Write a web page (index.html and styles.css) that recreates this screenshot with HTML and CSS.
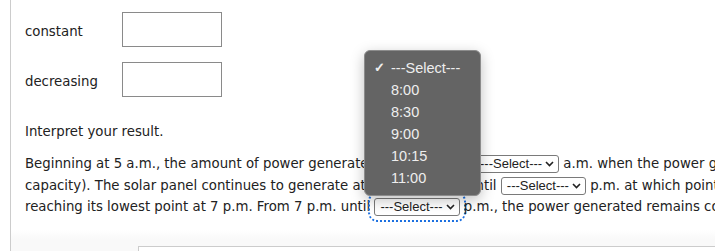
FILE: index.html
```html
<!DOCTYPE html>
<html lang="en">
<head>
    <meta charset="UTF-8">
    <title>Interpret your result</title>
    <link rel="stylesheet" href="styles.css">
</head>
<body>
    <div class="question">
        <div class="row">
            <span class="label">constant</span>
            <span class="answer-box"></span>
        </div>
        <div class="row">
            <span class="label">decreasing</span>
            <span class="answer-box"></span>
        </div>
        <p class="prompt">Interpret your result.</p>
        <div class="para">
            <div class="line">Beginning at 5 a.m., the amount of power generated <span class="tight">increases</span> until <span class="sel">---Select--- <svg class="chev" width="9" height="6" viewBox="0 0 9 6"><path d="M1 1 L4.5 4.5 L8 1" fill="none" stroke="#222" stroke-width="1.6"/></svg></span> a.m. when the power generated reaches its maximum (100%</div>
            <div class="line">capacity). The solar panel continues to generate at peak capacity until <span class="sel">---Select--- <svg class="chev" width="9" height="6" viewBox="0 0 9 6"><path d="M1 1 L4.5 4.5 L8 1" fill="none" stroke="#222" stroke-width="1.6"/></svg></span> p.m. at which point the power generated begins to decrease,</div>
            <div class="line">reaching its lowest point at 7 p.m. From 7 p.m. until <span class="sel focused">---Select--- <svg class="chev" width="9" height="6" viewBox="0 0 9 6"><path d="M1 1 L4.5 4.5 L8 1" fill="none" stroke="#222" stroke-width="1.6"/></svg></span> p.m., the power generated remains constant.</div>
        </div>
        <div class="next-box"></div>
    </div>

    <!-- open native dropdown of the third select -->
    <ul class="menu">
        <li><span class="tick">✓</span>---Select---</li>
        <li>8:00</li>
        <li>8:30</li>
        <li>9:00</li>
        <li>10:15</li>
        <li>11:00</li>
    </ul>
</body>
</html>
```
FILE: styles.css
```css
body {
    margin: 0;
    background-color: #ffffff;
    font-family: "DejaVu Sans", Verdana, sans-serif;
    font-size: 13.3px;
    color: #222222;
    overflow: hidden;
    height: 251px;
}
.question {
    margin-left: 10px;
    border-left: 1px solid #cccccc;
    padding: 12px 0 0 14px;
    height: 239px;
    position: relative;
    background: linear-gradient(to bottom, #ffffff 230px, #f9f9f9 239px);
}
.row {
    display: flex;
    align-items: center;
    height: 35px;
    margin-bottom: 15px;
}
.label {
    width: 97px;
    padding-top: 3px;
}
.answer-box {
    width: 98px;
    height: 33px;
    border: 1px solid #8a8a8a;
    background-color: #ffffff;
}
.prompt {
    margin: 24px 0 0 0;
    line-height: 21px;
}
.para {
    margin-top: 11px;
    white-space: nowrap;
}
.line {
    height: 21.5px;
    line-height: 21.5px;
}
.tight {
    letter-spacing: -0.9px;
}
.sel {
    display: inline-flex;
    align-items: center;
    box-sizing: border-box;
    height: 18px;
    padding: 0 4px 0 5px;
    border: 1px solid #7a7a7a;
    border-radius: 3px;
    background-color: #ffffff;
    font-family: "Liberation Sans", Arial, sans-serif;
    font-size: 13px;
    color: #222222;
    vertical-align: middle;
    line-height: 16px;
}
.chev {
    margin-left: 3px;
}
.focused {
    outline: 2px dotted #1a6fe0;
    outline-offset: 4px;
}
.next-box {
    position: absolute;
    left: 127px;
    top: 246px;
    width: 700px;
    height: 40px;
    border-top: 1px solid #cccccc;
    border-left: 1px solid #cccccc;
    background-color: #ffffff;
}
.menu {
    position: absolute;
    left: 364px;
    top: 50px;
    width: 117px;
    margin: 0;
    padding: 6px 0;
    list-style: none;
    background-color: #646464;
    border: 1px solid #8c8c8c;
    border-radius: 6px;
    box-shadow: 0 4px 14px rgba(0, 0, 0, 0.25);
    font-family: "Liberation Sans", Arial, sans-serif;
    font-size: 14.5px;
    color: #eeeeee;
    box-sizing: border-box;
}
.menu li {
    height: 22px;
    line-height: 22px;
    padding-left: 26px;
    position: relative;
}
.tick {
    position: absolute;
    left: 9px;
    font-weight: bold;
    font-size: 13px;
}
```
